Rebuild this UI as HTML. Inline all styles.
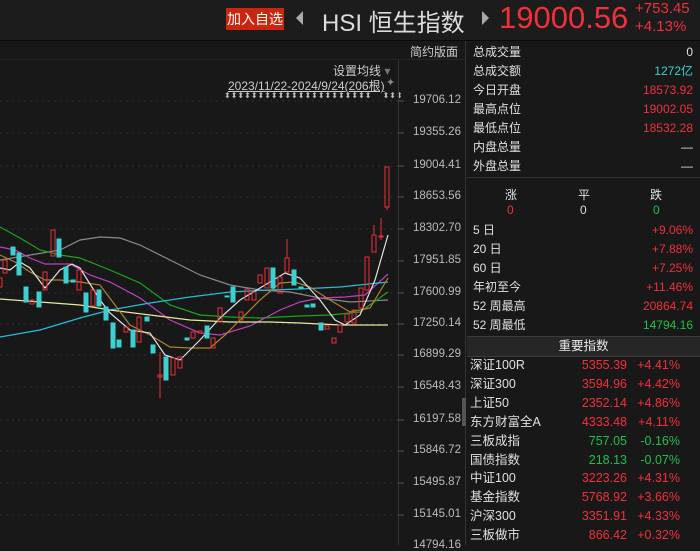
<!DOCTYPE html><html><head><meta charset="utf-8"><style>
body{margin:0;width:700px;height:545px;background:#181818;overflow:hidden;font-family:"Liberation Sans","Noto Sans CJK SC",sans-serif;position:relative;color:#ddd}
.a{position:absolute;white-space:nowrap}
.r{color:#f0303a}.g{color:#1fc04a}.c{color:#3ecfd0}
.lbl{font-size:12px;color:#e0e0e0}
.ax{font-size:11.5px;color:#bbb;left:413px}
</style></head><body>
<div class="a" style="left:0;top:0;width:700px;height:40px;background:#1c1c1c"></div>
<div class="a" style="left:0;top:40px;width:700px;height:1px;background:#0a0a0a"></div>
<div class="a" style="left:226px;top:8px;width:58px;height:22px;background:#c8260f;color:#fff;font-size:14px;line-height:22px;text-align:center">加入自选</div>
<div class="a" style="left:296px;top:11px;width:0;height:0;border-top:7px solid transparent;border-bottom:7px solid transparent;border-right:7px solid #aaa"></div>
<div class="a" style="left:322px;top:3px;font-size:24px;color:#dcdcdc">HSI 恒生指数</div>
<div class="a" style="left:482px;top:11px;width:0;height:0;border-top:7px solid transparent;border-bottom:7px solid transparent;border-left:7px solid #aaa"></div>
<div class="a r" style="left:499px;top:0px;font-size:31px">19000.56</div>
<div class="a r" style="left:635px;top:0px;font-size:15px">+753.45</div>
<div class="a r" style="left:635px;top:18px;font-size:15px">+4.13%</div>
<div class="a" style="left:465px;top:41px;width:1px;height:504px;background:#333"></div>
<div class="a" style="left:0;top:59px;width:465px;height:1px;background:#262626"></div>
<div class="a" style="left:410px;top:43px;font-size:12px;color:#ccc">简约版面</div>
<div class="a" style="left:333px;top:62px;font-size:12px;color:#ccc">设置均线 <span style="color:#777">▾</span></div>
<div class="a" style="left:228px;top:77px;font-size:12px;color:#ccc;text-decoration:underline">2023/11/22-2024/9/24(206根)</div>
<div class="a" style="left:386px;top:76px;font-size:11px;color:#888">✦</div>
<div class="a" style="left:224px;top:91px;font-size:8px;color:#bbb;letter-spacing:0px">⬍⬍⬍⬍⬍⬍⬍⬍⬍⬍⬍⬍⬍⬍⬍⬍⬍⬍⬍⬍⬍⬍&nbsp;&nbsp;&nbsp;&nbsp;&nbsp;⬍⬍⬍</div>
<div class="a" style="left:398px;top:60px;width:1px;height:485px;background:#333"></div>
<svg class="a" style="left:0;top:0" width="465" height="545">
<g stroke="#2e2e2e" stroke-dasharray="2,4">
<line x1="0" y1="101" x2="398" y2="101"/><line x1="0" y1="133" x2="398" y2="133"/><line x1="0" y1="166" x2="398" y2="166"/><line x1="0" y1="197" x2="398" y2="197"/><line x1="0" y1="229" x2="398" y2="229"/><line x1="0" y1="261" x2="398" y2="261"/><line x1="0" y1="293" x2="398" y2="293"/><line x1="0" y1="324" x2="398" y2="324"/><line x1="0" y1="355" x2="398" y2="355"/><line x1="0" y1="387" x2="398" y2="387"/><line x1="0" y1="420" x2="398" y2="420"/><line x1="0" y1="451" x2="398" y2="451"/><line x1="0" y1="483" x2="398" y2="483"/><line x1="0" y1="515" x2="398" y2="515"/></g>
<g stroke="#555"><line x1="398" y1="101" x2="404" y2="101"/><line x1="398" y1="133" x2="404" y2="133"/><line x1="398" y1="166" x2="404" y2="166"/><line x1="398" y1="197" x2="404" y2="197"/><line x1="398" y1="229" x2="404" y2="229"/><line x1="398" y1="261" x2="404" y2="261"/><line x1="398" y1="293" x2="404" y2="293"/><line x1="398" y1="324" x2="404" y2="324"/><line x1="398" y1="355" x2="404" y2="355"/><line x1="398" y1="387" x2="404" y2="387"/><line x1="398" y1="420" x2="404" y2="420"/><line x1="398" y1="451" x2="404" y2="451"/><line x1="398" y1="483" x2="404" y2="483"/><line x1="398" y1="515" x2="404" y2="515"/></g>
<g fill="none" stroke-width="1.2">
<polyline stroke="#8a8a8a" points="0,260 30,255 60,250 80,240 100,237 120,238 140,245 170,260 200,275 230,285 260,290 290,292 320,298 350,302 388,300"/>
<polyline stroke="#1aa51a" points="0,227 20,238 40,250 60,255 80,258 110,270 140,283 170,305 200,315 230,317 260,318 300,316 330,315 360,312 388,292"/>
<polyline stroke="#c040c0" points="0,247 15,250 30,258 45,264 70,264 90,275 110,282 140,298 170,320 200,333 220,335 250,326 280,310 300,302 320,298 345,297 365,295 388,274"/>
<polyline stroke="#20c0d8" points="0,337 40,330 80,318 110,310 150,303 190,297 230,292 270,290 300,289 340,287 388,282"/>
<polyline stroke="#e8e8a0" points="0,299 40,302 80,305 110,310 150,315 190,320 230,322 270,322 300,323 340,325 388,325"/>
<polyline stroke="#b08030" points="0,255 15,262 30,272 45,280 60,280 80,282 100,285 115,305 130,325 150,335 170,347 190,348 210,348 225,335 240,320 260,300 280,283 295,282 310,287 330,300 350,312 370,308 388,278"/>
<polyline stroke="#e0e0e0" points="0,268 10,270 20,262 30,268 45,288 60,270 72,264 80,268 100,300 110,313 130,330 150,333 165,355 180,360 200,340 220,318 240,300 260,288 285,273 300,278 320,300 335,320 345,325 360,315 375,280 388,235"/>
</g>
<g fill="#3ecfd0" stroke="#3ecfd0">
<rect x="11" y="247" width="4" height="8"/><rect x="17" y="253" width="4" height="22"/><rect x="24" y="287" width="4" height="15"/><rect x="37" y="292" width="4" height="15"/><rect x="57" y="239" width="4" height="18"/><rect x="64" y="267" width="4" height="16"/><rect x="71" y="280" width="4" height="2"/><rect x="84" y="293" width="4" height="19"/><rect x="97" y="290" width="4" height="16"/><rect x="104" y="307" width="4" height="13"/><rect x="111" y="323" width="4" height="25"/><rect x="117" y="340" width="4" height="7"/><rect x="131" y="330" width="4" height="17"/><rect x="145" y="317" width="4" height="4"/><rect x="151" y="345" width="4" height="8"/><rect x="164" y="357" width="4" height="23"/><rect x="185" y="338" width="4" height="2"/><rect x="205" y="326" width="4" height="12"/><rect x="225" y="296" width="4" height="1"/><rect x="231" y="287" width="4" height="15"/><rect x="271" y="268" width="4" height="20"/><rect x="292" y="270" width="4" height="15"/><rect x="299" y="287" width="4" height="1"/><rect x="305" y="305" width="4" height="2"/><rect x="311" y="304" width="4" height="3"/><rect x="319" y="323" width="4" height="7"/>
</g>
<g fill="none" stroke="#e8303a">
<rect x="-2" y="278" width="4" height="9"/><rect x="3" y="260" width="4" height="13"/><rect x="30" y="300" width="4" height="4"/><rect x="43" y="272" width="4" height="18"/><rect x="51" y="230" width="4" height="26"/><rect x="77" y="270" width="4" height="20"/><rect x="91" y="290" width="4" height="16"/><rect x="124" y="327" width="4" height="5"/><rect x="137" y="317" width="4" height="25"/><rect x="158" y="375" width="4" height="2"/><line x1="160" y1="352" x2="160" y2="398"/><rect x="171" y="358" width="4" height="17"/><rect x="178" y="357" width="4" height="11"/><rect x="191" y="332" width="4" height="6"/><rect x="198" y="331" width="4" height="2"/><rect x="211" y="338" width="4" height="10"/><rect x="218" y="308" width="4" height="14"/><rect x="239" y="312" width="4" height="8"/><rect x="245" y="289" width="4" height="11"/><rect x="252" y="292" width="4" height="8"/><rect x="258" y="275" width="4" height="8"/><rect x="265" y="268" width="4" height="20"/><rect x="278" y="277" width="4" height="16"/><rect x="285" y="258" width="4" height="14"/><line x1="287" y1="239" x2="287" y2="258"/><rect x="325" y="326" width="4" height="3"/><rect x="332" y="338" width="4" height="5"/><rect x="338" y="325" width="4" height="7"/><rect x="345" y="314" width="4" height="8"/><rect x="352" y="310" width="4" height="13"/><rect x="359" y="288" width="4" height="20"/><rect x="365" y="257" width="4" height="33"/><rect x="372" y="235" width="4" height="17"/><line x1="374" y1="225" x2="374" y2="235"/><rect x="379" y="236" width="4" height="1"/><line x1="381" y1="218" x2="381" y2="240"/><rect x="385" y="167" width="4" height="40"/><line x1="387" y1="207" x2="387" y2="210"/>
</g>
</svg>
<div class="a ax" style="top:94px">19706.12</div><div class="a ax" style="top:126px">19355.26</div><div class="a ax" style="top:159px">19004.41</div><div class="a ax" style="top:190px">18653.56</div><div class="a ax" style="top:222px">18302.70</div><div class="a ax" style="top:254px">17951.85</div><div class="a ax" style="top:286px">17600.99</div><div class="a ax" style="top:317px">17250.14</div><div class="a ax" style="top:348px">16899.29</div><div class="a ax" style="top:380px">16548.43</div><div class="a ax" style="top:413px">16197.58</div><div class="a ax" style="top:444px">15846.72</div><div class="a ax" style="top:476px">15495.87</div><div class="a ax" style="top:508px">15145.01</div><div class="a ax" style="top:539px">14794.16</div>
<div class="a" style="left:462px;top:398px;width:4px;height:28px;background:#555"></div>
<div style="position:absolute;left:473px;top:43px;width:220px;font-size:12px;line-height:19px;color:#e0e0e0">
<div style="display:flex;justify-content:space-between"><span>总成交量</span><span>0</span></div>
<div style="display:flex;justify-content:space-between"><span>总成交额</span><span class="c">1272亿</span></div>
<div style="display:flex;justify-content:space-between"><span>今日开盘</span><span class="r">18573.92</span></div>
<div style="display:flex;justify-content:space-between"><span>最高点位</span><span class="r">19002.05</span></div>
<div style="display:flex;justify-content:space-between"><span>最低点位</span><span class="r">18532.28</span></div>
<div style="display:flex;justify-content:space-between"><span>内盘总量</span><span>—</span></div>
<div style="display:flex;justify-content:space-between"><span>外盘总量</span><span>—</span></div>
</div>
<div class="a" style="left:466px;top:177px;width:234px;height:1px;background:#333"></div>
<div class="a lbl" style="left:505px;top:186px">涨</div><div class="a lbl" style="left:578px;top:186px">平</div><div class="a lbl" style="left:650px;top:186px">跌</div>
<div class="a r" style="left:507px;top:203px;font-size:12px">0</div><div class="a" style="left:580px;top:203px;font-size:12px">0</div><div class="a g" style="left:653px;top:203px;font-size:12px">0</div>
<div style="position:absolute;left:473px;top:221px;width:220px;font-size:12px;line-height:19px;color:#e0e0e0">
<div style="display:flex;justify-content:space-between"><span>5 日</span><span class="r">+9.06%</span></div>
<div style="display:flex;justify-content:space-between"><span>20 日</span><span class="r">+7.88%</span></div>
<div style="display:flex;justify-content:space-between"><span>60 日</span><span class="r">+7.25%</span></div>
<div style="display:flex;justify-content:space-between"><span>年初至今</span><span class="r">+11.46%</span></div>
<div style="display:flex;justify-content:space-between"><span>52 周最高</span><span class="r">20864.74</span></div>
<div style="display:flex;justify-content:space-between"><span>52 周最低</span><span class="g">14794.16</span></div>
</div>
<div class="a" style="left:467px;top:336px;width:233px;height:19px;background:#262626;border-top:1px solid #3a3a3a;border-bottom:1px solid #3a3a3a;text-align:center;font-size:12.5px;line-height:19px;color:#e8e8e8">重要指数</div>
<div style="position:absolute;left:470px;top:356px;width:210px;font-size:12.5px;line-height:18.9px;color:#e0e0e0">
<div style="display:flex"><span style="width:92px">深证100R</span><span class="r" style="width:65px;text-align:right">5355.39</span><span class="r" style="width:53px;text-align:right">+4.41%</span></div>
<div style="display:flex"><span style="width:92px">深证300</span><span class="r" style="width:65px;text-align:right">3594.96</span><span class="r" style="width:53px;text-align:right">+4.42%</span></div>
<div style="display:flex"><span style="width:92px">上证50</span><span class="r" style="width:65px;text-align:right">2352.14</span><span class="r" style="width:53px;text-align:right">+4.86%</span></div>
<div style="display:flex"><span style="width:92px">东方财富全A</span><span class="r" style="width:65px;text-align:right">4333.48</span><span class="r" style="width:53px;text-align:right">+4.11%</span></div>
<div style="display:flex"><span style="width:92px">三板成指</span><span class="g" style="width:65px;text-align:right">757.05</span><span class="g" style="width:53px;text-align:right">-0.16%</span></div>
<div style="display:flex"><span style="width:92px">国债指数</span><span class="g" style="width:65px;text-align:right">218.13</span><span class="g" style="width:53px;text-align:right">-0.07%</span></div>
<div style="display:flex"><span style="width:92px">中证100</span><span class="r" style="width:65px;text-align:right">3223.26</span><span class="r" style="width:53px;text-align:right">+4.31%</span></div>
<div style="display:flex"><span style="width:92px">基金指数</span><span class="r" style="width:65px;text-align:right">5768.92</span><span class="r" style="width:53px;text-align:right">+3.66%</span></div>
<div style="display:flex"><span style="width:92px">沪深300</span><span class="r" style="width:65px;text-align:right">3351.91</span><span class="r" style="width:53px;text-align:right">+4.33%</span></div>
<div style="display:flex"><span style="width:92px">三板做市</span><span class="r" style="width:65px;text-align:right">866.42</span><span class="r" style="width:53px;text-align:right">+0.32%</span></div>
</div>
</body></html>
